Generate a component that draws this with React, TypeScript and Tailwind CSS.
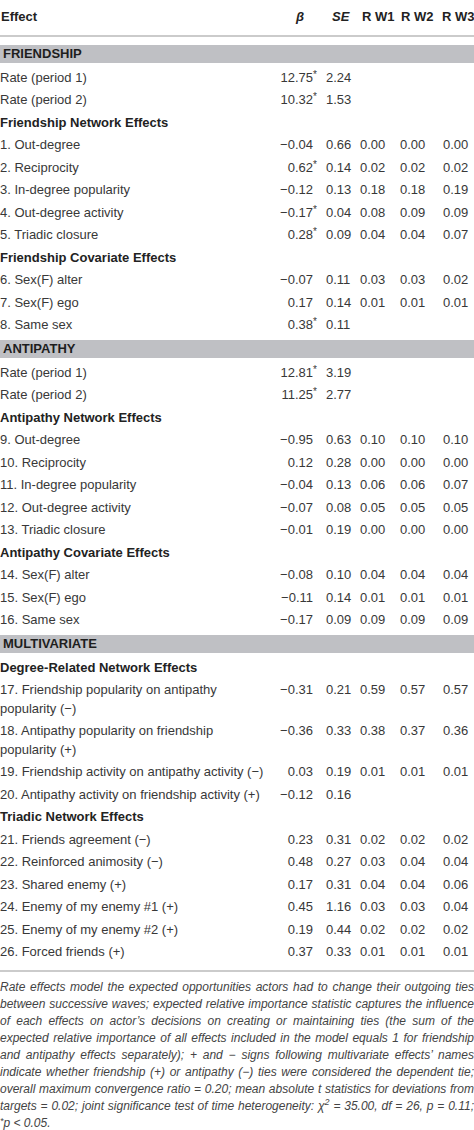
import React from "react";

type Row =
  | { kind: "band"; text: string; first?: boolean }
  | { kind: "head"; text: string }
  | { kind: "data"; label: React.ReactNode; b: string; star?: boolean; se: string; w1?: string; w2?: string; w3?: string };

const M = "\u2212";

const rows: Row[] = [
  { kind: "band", text: "FRIENDSHIP", first: true },
  { kind: "data", label: "Rate (period 1)", b: "12.75", star: true, se: "2.24" },
  { kind: "data", label: "Rate (period 2)", b: "10.32", star: true, se: "1.53" },
  { kind: "head", text: "Friendship Network Effects" },
  { kind: "data", label: "1. Out-degree", b: M + "0.04", se: "0.66", w1: "0.00", w2: "0.00", w3: "0.00" },
  { kind: "data", label: "2. Reciprocity", b: "0.62", star: true, se: "0.14", w1: "0.02", w2: "0.02", w3: "0.02" },
  { kind: "data", label: "3. In-degree popularity", b: M + "0.12", se: "0.13", w1: "0.18", w2: "0.18", w3: "0.19" },
  { kind: "data", label: "4. Out-degree activity", b: M + "0.17", star: true, se: "0.04", w1: "0.08", w2: "0.09", w3: "0.09" },
  { kind: "data", label: "5. Triadic closure", b: "0.28", star: true, se: "0.09", w1: "0.04", w2: "0.04", w3: "0.07" },
  { kind: "head", text: "Friendship Covariate Effects" },
  { kind: "data", label: "6. Sex(F) alter", b: M + "0.07", se: "0.11", w1: "0.03", w2: "0.03", w3: "0.02" },
  { kind: "data", label: "7. Sex(F) ego", b: "0.17", se: "0.14", w1: "0.01", w2: "0.01", w3: "0.01" },
  { kind: "data", label: "8. Same sex", b: "0.38", star: true, se: "0.11" },
  { kind: "band", text: "ANTIPATHY" },
  { kind: "data", label: "Rate (period 1)", b: "12.81", star: true, se: "3.19" },
  { kind: "data", label: "Rate (period 2)", b: "11.25", star: true, se: "2.77" },
  { kind: "head", text: "Antipathy Network Effects" },
  { kind: "data", label: "9. Out-degree", b: M + "0.95", se: "0.63", w1: "0.10", w2: "0.10", w3: "0.10" },
  { kind: "data", label: "10. Reciprocity", b: "0.12", se: "0.28", w1: "0.00", w2: "0.00", w3: "0.00" },
  { kind: "data", label: "11. In-degree popularity", b: M + "0.04", se: "0.13", w1: "0.06", w2: "0.06", w3: "0.07" },
  { kind: "data", label: "12. Out-degree activity", b: M + "0.07", se: "0.08", w1: "0.05", w2: "0.05", w3: "0.05" },
  { kind: "data", label: "13. Triadic closure", b: M + "0.01", se: "0.19", w1: "0.00", w2: "0.00", w3: "0.00" },
  { kind: "head", text: "Antipathy Covariate Effects" },
  { kind: "data", label: "14. Sex(F) alter", b: M + "0.08", se: "0.10", w1: "0.04", w2: "0.04", w3: "0.04" },
  { kind: "data", label: "15. Sex(F) ego", b: M + "0.11", se: "0.14", w1: "0.01", w2: "0.01", w3: "0.01" },
  { kind: "data", label: "16. Same sex", b: M + "0.17", se: "0.09", w1: "0.09", w2: "0.09", w3: "0.09" },
  { kind: "band", text: "MULTIVARIATE" },
  { kind: "head", text: "Degree-Related Network Effects" },
  {
    kind: "data",
    label: (
      <>
        17. Friendship popularity on antipathy
        <br />
        popularity ({M})
      </>
    ),
    b: M + "0.31",
    se: "0.21",
    w1: "0.59",
    w2: "0.57",
    w3: "0.57",
  },
  {
    kind: "data",
    label: (
      <>
        18. Antipathy popularity on friendship
        <br />
        popularity (+)
      </>
    ),
    b: M + "0.36",
    se: "0.33",
    w1: "0.38",
    w2: "0.37",
    w3: "0.36",
  },
  { kind: "data", label: `19. Friendship activity on antipathy activity (${M})`, b: "0.03", se: "0.19", w1: "0.01", w2: "0.01", w3: "0.01" },
  { kind: "data", label: "20. Antipathy activity on friendship activity (+)", b: M + "0.12", se: "0.16" },
  { kind: "head", text: "Triadic Network Effects" },
  { kind: "data", label: `21. Friends agreement (${M})`, b: "0.23", se: "0.31", w1: "0.02", w2: "0.02", w3: "0.02" },
  { kind: "data", label: `22. Reinforced animosity (${M})`, b: "0.48", se: "0.27", w1: "0.03", w2: "0.04", w3: "0.04" },
  { kind: "data", label: "23. Shared enemy (+)", b: "0.17", se: "0.31", w1: "0.04", w2: "0.04", w3: "0.06" },
  { kind: "data", label: "24. Enemy of my enemy #1 (+)", b: "0.45", se: "1.16", w1: "0.03", w2: "0.03", w3: "0.04" },
  { kind: "data", label: "25. Enemy of my enemy #2 (+)", b: "0.19", se: "0.44", w1: "0.02", w2: "0.02", w3: "0.02" },
  { kind: "data", label: "26. Forced friends (+)", b: "0.37", se: "0.33", w1: "0.01", w2: "0.01", w3: "0.01" },
];

function Star() {
  return <span className="text-[10px] leading-none align-[4px]">*</span>;
}

function RowView({ r }: { r: Row }) {
  if (r.kind === "band") {
    return (
      <div
        className={`${r.first ? "mt-[8px]" : "mt-[3px]"} mb-[4px] h-[18px] bg-[#bfc0c4] pl-[3px] text-[13px] font-bold leading-[18px] text-[#1e1e1e]`}
      >
        {r.text}
      </div>
    );
  }
  if (r.kind === "head") {
    return (
      <div className="py-[2px] text-[13px] font-bold leading-[18.5px] text-[#222] whitespace-nowrap">{r.text}</div>
    );
  }
  return (
    <div className="flex items-start py-[2px] text-[13px] leading-[18.5px] text-[#383838]">
      <div className="w-[275px] shrink-0 whitespace-nowrap">{r.label}</div>
      <div className="flex w-[43px] shrink-0">
        <div className="w-[38px] text-right">{r.b}</div>
        <div className="w-[5px]">{r.star ? <Star /> : null}</div>
      </div>
      <div className="w-[42px] shrink-0 pl-[8px]">{r.se}</div>
      <div className="w-[40px] shrink-0">{r.w1 ?? ""}</div>
      <div className="w-[43px] shrink-0">{r.w2 ?? ""}</div>
      <div className="w-[31px] shrink-0 whitespace-nowrap">{r.w3 ?? ""}</div>
    </div>
  );
}

const noteLines: React.ReactNode[] = [
  "Rate effects model the expected opportunities actors had to change their outgoing ties",
  "between successive waves; expected relative importance statistic captures the influence",
  "of each effects on actor\u2019s decisions on creating or maintaining ties (the sum of the",
  "expected relative importance of all effects included in the model equals 1 for friendship",
  `and antipathy effects separately); + and ${M} signs following multivariate effects\u2019 names`,
  `indicate whether friendship (+) or antipathy (${M}) ties were considered the dependent tie;`,
  "overall maximum convergence ratio = 0.20; mean absolute t statistics for deviations from",
  <>
    targets = 0.02; joint significance test of time heterogeneity: {"\u03c7"}
    <span className="text-[9px] leading-none align-[5px]">2</span> = 35.00, df = 26, p = 0.11;
  </>,
];

export default function App() {
  return (
    <div className="w-[474px] overflow-hidden bg-white font-['Liberation_Sans',Arial,sans-serif]">
      {/* header */}
      <div className="flex border-b-2 border-[#cbcbcb] pt-[8px] pb-[8px] text-[13px] font-bold leading-[18.5px] text-[#222]">
        <div className="w-[275px] shrink-0 pl-[1px]">Effect</div>
        <div className="w-[43px] shrink-0 pr-[14px] text-right italic">{"\u03b2"}</div>
        <div className="w-[42px] shrink-0 pl-[14px] italic">SE</div>
        <div className="w-[40px] shrink-0 pl-[2px] whitespace-nowrap">R W1</div>
        <div className="w-[43px] shrink-0 pl-[1px] whitespace-nowrap">R W2</div>
        <div className="w-[31px] shrink-0 -ml-[1px] whitespace-nowrap">R W3</div>
      </div>

      {rows.map((r, i) => (
        <RowView key={i} r={r} />
      ))}

      {/* footnote */}
      <div className="mt-[6px] border-t-2 border-[#cbcbcb] pt-[7px]">
        <div className="w-[474px] text-[12px] italic leading-[17px] text-[#444]">
          {noteLines.map((l, i) => (
            <div key={i} className="text-justify [text-align-last:justify]">
              {l}
            </div>
          ))}
          <div className="text-left">
            <span className="text-[9px] leading-none align-[3px]">*</span>p &lt; 0.05.
          </div>
        </div>
      </div>
    </div>
  );
}
